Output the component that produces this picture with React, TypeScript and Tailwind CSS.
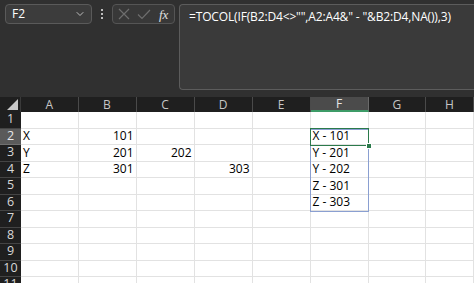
import { ChevronDown } from "lucide-react";

const cols = ["A", "B", "C", "D", "E", "F", "G", "H"];

type Cell = { v: string; right?: boolean };
const data: Record<string, Cell> = {
  A2: { v: "X" },
  B2: { v: "101", right: true },
  F2: { v: "X - 101" },
  A3: { v: "Y" },
  B3: { v: "201", right: true },
  C3: { v: "202", right: true },
  F3: { v: "Y - 201" },
  A4: { v: "Z" },
  B4: { v: "301", right: true },
  D4: { v: "303", right: true },
  F4: { v: "Y - 202" },
  F5: { v: "Z - 301" },
  F6: { v: "Z - 303" },
};

const rows = [1, 2, 3, 4, 5, 6, 7, 8, 9, 10, 11];

export default function App() {
  return (
    <div
      className="w-[474px] h-[283px] overflow-hidden bg-white"
      style={{ fontFamily: '"Open Sans", "Noto Sans", sans-serif' }}
    >
      {/* formula bar area */}
      <div className="h-[97px] bg-[#303030] flex items-start pt-[4px] pl-[5px] gap-[4px]">
        <div className="w-[87px] h-[20px] rounded-[4px] border border-[#5a5a5a] bg-[#3c3c3c] flex items-center justify-between pl-[6px] pr-[5px] text-[12px] text-white">
          <span>F2</span>
          <ChevronDown className="w-[12px] h-[12px] text-[#bdbdbd]" strokeWidth={2} />
        </div>
        <div className="w-[12px] h-[20px] flex flex-col items-center justify-center gap-[2px]">
          <span className="w-[2px] h-[2px] bg-[#bdbdbd]" />
          <span className="w-[2px] h-[2px] bg-[#bdbdbd]" />
          <span className="w-[2px] h-[2px] bg-[#bdbdbd]" />
        </div>
        <div className="w-[63px] h-[20px] rounded-[4px] border border-[#555] bg-[#383838] flex items-center pl-[5px] gap-[4px]">
          <svg width="12" height="12" viewBox="0 0 12 12" className="text-[#6e6e6e]">
            <path d="M1 1 L11 11 M11 1 L1 11" stroke="currentColor" strokeWidth="1.2" fill="none" />
          </svg>
          <svg width="14" height="12" viewBox="0 0 14 12" className="text-[#6e6e6e] ml-[3px]">
            <path d="M1 6.5 L5 10.5 L13 2" stroke="currentColor" strokeWidth="1.2" fill="none" />
          </svg>
          <span
            className="ml-[4px] text-[13px] italic text-[#e0e0e0] leading-none"
            style={{ fontFamily: '"Liberation Serif", serif' }}
          >
            fx
          </span>
        </div>
        <div className="flex-1 h-[86px] rounded-tl-[4px] rounded-bl-[4px] border border-r-0 border-[#5c5c5c] bg-[#3a3a3a] pl-[9px] pt-[3px] text-[12px] text-white tracking-[-0.15px]">
          =TOCOL(IF(B2:D4&lt;&gt;"",A2:A4&amp;" - "&amp;B2:D4,NA()),3)
        </div>
      </div>

      {/* sheet */}
      <div className="relative">
        <div className="grid grid-cols-[21px_57.5px_58px_58px_58px_58px_58px_57.5px_1fr]">
          {/* header row */}
          <div className="h-[15px] bg-[#1f1f1f] border-r border-[#3a3a3a] relative overflow-hidden">
            <div
              className="absolute right-[2px] bottom-[2px] w-[11px] h-[11px] bg-[#c8c8c8]"
              style={{ clipPath: "polygon(100% 0, 100% 100%, 0 100%)" }}
            />
          </div>
          {cols.map((c) => (
            <div
              key={c}
              className={
                c === "F"
                  ? "h-[15px] bg-[#4b4b4b] border-r border-[#6a6a6a] border-b-2 border-b-[#3d9b67] flex items-center justify-center text-[12px] text-[#e6e6e6]"
                  : "h-[15px] bg-[#1f1f1f] border-r border-[#4a4a4a] flex items-center justify-center text-[12px] text-[#c6c6c6]"
              }
            >
              {c}
            </div>
          ))}
          {rows.map((r) => (
            <Row key={r} r={r} />
          ))}
        </div>

        {/* spill range outline F2:F6 */}
        <div className="absolute left-[310px] top-[31.5px] w-[58.5px] h-[83px] border border-[#8a9fd1] pointer-events-none" />
        {/* active cell F2 */}
        <div className="absolute left-[310px] top-[31px] w-[58.5px] h-[17.5px] border-[1.5px] border-[#2b7a4b] pointer-events-none" />
        <div className="absolute left-[366px] top-[46px] w-[4px] h-[4px] bg-[#2b7a4b] border border-white box-content pointer-events-none" />
      </div>
    </div>
  );
}

function Row({ r }: { r: number }) {
  return (
    <>
      <div
        className={
          r === 2
            ? "h-[16.5px] bg-[#5a5a5a] border-b border-[#707070] flex items-center justify-center text-[12.5px] text-[#e8e8e8]"
            : "h-[16.5px] bg-[#1f1f1f] border-b border-[#444] flex items-center justify-center text-[12.5px] text-[#d8d8d8]"
        }
      >
        {r}
      </div>
      {cols.map((c) => {
        const cell = data[c + r];
        return (
          <div
            key={c}
            className={
              "h-[16.5px] border-r border-b border-[#e2e2e2] flex items-center px-[2px] text-[12px] text-black whitespace-nowrap " +
              (cell?.right ? "justify-end" : "justify-start")
            }
          >
            {cell?.v}
          </div>
        );
      })}
    </>
  );
}
